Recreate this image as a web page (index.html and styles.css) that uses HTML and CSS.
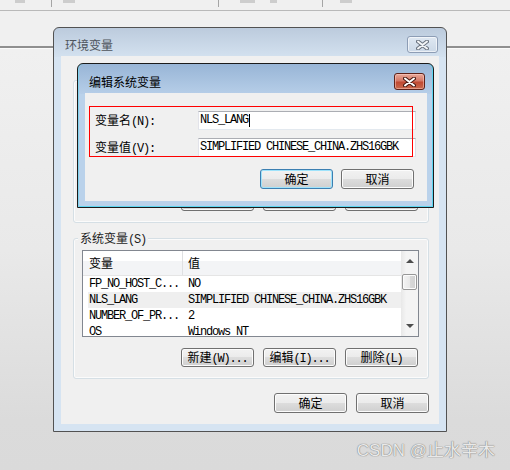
FILE: index.html
```html
<!DOCTYPE html>
<html lang="zh-CN">
<head>
  <meta charset="UTF-8">
  <title>环境变量</title>
  <link rel="stylesheet" href="styles.css">
</head>
<body>

<!-- 背景里被截掉的工具栏 -->
<div class="toolbar">
  <i class="blob b1"></i>
  <i class="sep s1"></i>
  <i class="blob b2"></i>
  <i class="sep s2"></i>
  <i class="blob b3"></i>
  <i class="blob b4"></i>
  <i class="sep s3"></i>
  <i class="blob b5"></i>
</div>
<div class="rule"></div>

<!-- 环境变量窗口 -->
<section class="win win-env">
  <div class="titlebar">
    <span class="title">环境变量</span>
    <span class="close close-idle">
      <svg width="13" height="10" viewBox="0 0 13 10"><path d="M2 1.5 L11 8.5 M11 1.5 L2 8.5" stroke="#6b7480" stroke-width="4" stroke-linecap="round"/><path d="M2 1.5 L11 8.5 M11 1.5 L2 8.5" stroke="#f4f6f8" stroke-width="2" stroke-linecap="round"/></svg>
    </span>
  </div>
  <div class="client">
    <!-- 用户变量：几乎全被对话框挡住 -->
    <div class="group group-user">
      <div class="listbox listbox-user"></div>
      <div class="btnrow">
        <button class="btn"></button>
        <button class="btn"></button>
        <button class="btn"></button>
      </div>
    </div>

    <div class="group group-sys">
      <span class="group-title">系统变量<span class="m">(S)</span></span>
      <div class="listbox">
        <div class="rows">
          <div class="row head"><span class="c1">变量</span><span class="c2">值</span></div>
          <div class="row"><span class="c1 m">FP_NO_HOST_C...</span><span class="c2 m">NO</span></div>
          <div class="row sel"><span class="c1 m">NLS_LANG</span><span class="c2 m">SIMPLIFIED CHINESE_CHINA.ZHS16GBK</span></div>
          <div class="row"><span class="c1 m">NUMBER_OF_PR...</span><span class="c2 m">2</span></div>
          <div class="row"><span class="c1 m">OS</span><span class="c2 m">Windows_NT</span></div>
        </div>
        <div class="vscroll">
          <div class="sb-btn"><i class="arrow-up"></i></div>
          <div class="thumb"></div>
          <div class="sb-btn sb-down"><i class="arrow-down"></i></div>
        </div>
      </div>
      <div class="btnrow">
        <button class="btn">新建<span class="m">(W)...</span></button>
        <button class="btn">编辑<span class="m">(I)...</span></button>
        <button class="btn">删除<span class="m">(L)</span></button>
      </div>
    </div>

    <div class="btnrow dlg-btns">
      <button class="btn btn-tall">确定</button>
      <button class="btn btn-tall">取消</button>
    </div>
  </div>
</section>

<!-- 编辑系统变量对话框 -->
<section class="win win-edit">
  <div class="titlebar">
    <span class="title">编辑系统变量</span>
    <span class="close close-red">
      <svg width="13" height="10" viewBox="0 0 13 10"><path d="M2 1.5 L11 8.5 M11 1.5 L2 8.5" stroke="#4a1a12" stroke-width="4" stroke-linecap="round"/><path d="M2 1.5 L11 8.5 M11 1.5 L2 8.5" stroke="#ffffff" stroke-width="2" stroke-linecap="round"/></svg>
    </span>
  </div>
  <div class="client edit-client">
    <div class="fields">
      <label>变量名<span class="m">(N):</span></label>
      <div class="field"><span class="m">NLS_LANG</span><i class="caret"></i></div>
      <label>变量值<span class="m">(V):</span></label>
      <div class="field"><span class="m">SIMPLIFIED CHINESE_CHINA.ZHS16GBK</span></div>
    </div>
    <div class="btnrow edit-btns">
      <button class="btn btn-tall btn-default">确定</button>
      <button class="btn btn-tall">取消</button>
    </div>
    <div class="mark"></div>
  </div>
</section>

<div class="watermark">CSDN @止水辛木</div>

</body>
</html>
```

FILE: styles.css
```css
* {
  box-sizing: border-box;
}
body {
  margin: 0;
  width: 510px;
  height: 470px;
  overflow: hidden;
  position: relative;
  font-family: "Noto Sans CJK SC", sans-serif;
  font-size: 12px;
  color: #000;
  background: linear-gradient(#f0f0f0 0, #f0f0f0 50px, #e9e9e9 250px, #dbdbdb 420px, #dadada 470px);
}
.m {
  font-family: "Liberation Mono", monospace;
  letter-spacing: -1.2px;
}

/* 背景工具栏 */
.toolbar {
  height: 11px;
  border-bottom: 1px solid #b9b9b9;
  display: flex;
  align-items: flex-start;
}
.blob {
  height: 3px;
  background: #cdcdcd;
}
.sep {
  width: 1px;
  height: 7px;
  background: #a5a5a5;
}
.b1 { margin-left: 15px; width: 10px; }
.s1 { margin-left: 26px; }
.b2 { margin-left: 11px; width: 12px; }
.s2 { margin-left: 143px; }
.b3 { margin-left: 21px; width: 15px; }
.b4 { margin-left: 15px; width: 7px; }
.s3 { margin-left: 45px; }
.b5 { margin-left: 17px; width: 12px; }
.rule {
  margin-top: 35px;
  height: 3px;
  border-top: 2px solid #8f8f8f;
  border-bottom: 1px solid #fafafa;
}

/* 窗口 */
.win {
  position: absolute;
  border: 1px solid #525252;
  border-radius: 6px 6px 0 0;
  display: flex;
  flex-direction: column;
}
.titlebar {
  display: flex;
  justify-content: space-between;
  align-items: flex-start;
  flex: none;
}
.title {
  line-height: 17px;
}
.close {
  width: 31px;
  height: 17px;
  border-radius: 3px;
  display: flex;
  align-items: center;
  justify-content: center;
}
.close-idle {
  border: 1px solid #8d9db5;
  background: linear-gradient(#dfe8f2, #cbd8e7);
  box-shadow: inset 0 0 0 1px rgba(255, 255, 255, 0.6);
}
.close-red {
  border: 1px solid #5e2219;
  background: linear-gradient(#e9a99a, #d47866 45%, #c14a33 55%, #c86a4e);
  box-shadow: inset 0 0 0 1px rgba(255, 210, 200, 0.5);
}

.win-env {
  left: 53px;
  top: 27px;
  width: 394px;
  height: 405px;
  padding: 0 7px 7px 7px;
  background: linear-gradient(#bccbdd, #d3e1ef 29px, #d6e4f2 29px);
}
.win-env .titlebar {
  height: 28px;
  padding: 8px 1px 0 4px;
}
.win-env .title {
  color: #4e545c;
}
.client {
  background: #f0f0f0;
  flex: 1;
  display: flex;
  flex-direction: column;
  padding: 24px 10px 0 12px;
}

/* 分组框 */
.group {
  position: relative;
  border: 1px solid #d5dfe5;
  border-radius: 3px;
  box-shadow: inset 0 0 0 1px #fbfbfb;
  display: flex;
  flex-direction: column;
  padding: 11px 9px 11px 8px;
}
.group-user {
  height: 143px;
}
.group-sys {
  height: 141px;
  margin-top: 15px;
}
.group-title {
  position: absolute;
  top: -9px;
  left: 4px;
  padding: 0 2px;
  line-height: 16px;
  background: #f0f0f0;
  color: #1e1e1e;
}
.listbox {
  height: 87px;
  flex: none;
  border: 1px solid #828790;
  background: #fff;
  display: flex;
  overflow: hidden;
}
.listbox-user {
  flex: 1;
}
.rows {
  flex: 1;
}
.row {
  display: flex;
  height: 16px;
  line-height: 16px;
  white-space: nowrap;
}
.row.head {
  height: 25px;
  line-height: 24px;
  border-bottom: 1px solid #e5e5e5;
  background: linear-gradient(#ffffff 42%, #f3f4f6 42%);
}
.c1 {
  width: 100px;
  padding-left: 6px;
  flex: none;
}
.head .c1 {
  border-right: 1px solid #dfe0e2;
}
.c2 {
  padding-left: 5px;
}
.row.sel {
  background: linear-gradient(to right, transparent 5px, #efefef 5px);
}
.vscroll {
  width: 17px;
  flex: none;
  background: linear-gradient(to right, #e8e8e8, #f4f4f4 30%, #f4f4f4);
  display: flex;
  flex-direction: column;
  align-items: center;
}
.sb-btn {
  height: 17px;
  width: 17px;
  display: flex;
  justify-content: center;
}
.sb-down {
  margin-top: auto;
}
.arrow-up {
  margin-top: 8px;
  width: 0;
  height: 0;
  border-left: 4px solid transparent;
  border-right: 4px solid transparent;
  border-bottom: 4px solid #4d4d4d;
}
.arrow-down {
  margin-top: 5px;
  width: 0;
  height: 0;
  border-left: 4px solid transparent;
  border-right: 4px solid transparent;
  border-top: 4px solid #4d4d4d;
}
.thumb {
  margin-top: 6px;
  width: 15px;
  height: 16px;
  border: 1px solid #979797;
  border-radius: 2px;
  background: linear-gradient(to right, #f4f4f4, #e9e9e9 50%, #d9d9d9 50%, #d2d2d2);
  box-shadow: inset 0 0 0 1px #fbfbfb;
}

/* 按钮 */
.btnrow {
  display: flex;
  justify-content: flex-end;
  gap: 9px;
  margin-top: 11px;
  padding-right: 1px;
}
.btn {
  width: 73px;
  height: 19px;
  padding: 0;
  font: inherit;
  line-height: 16px;
  color: #000;
  border: 1px solid #707070;
  border-radius: 3px;
  background: linear-gradient(#f2f2f2 0%, #ebebeb 49%, #dddddd 50%, #cfcfcf 100%);
  box-shadow: inset 0 0 0 1px #fcfcfc;
  white-space: nowrap;
}
.btn-tall {
  height: 20px;
}
.btn-default {
  border-color: #3c7fb1;
  box-shadow: inset 0 0 0 1px #9fe3fb;
}
.dlg-btns {
  margin-top: 14px;
  padding-right: 0;
}

/* 编辑对话框 */
.win-edit {
  left: 77px;
  top: 63px;
  width: 357px;
  height: 145px;
  border-color: #1b1b1b;
  padding: 0 6px 6px 7px;
  background: linear-gradient(#98b5d6, #b6cee8 30px, #bad2eb 30px);
  box-shadow: inset 1px 0 #7fd2ee, inset -1px 0 #5cd6f1, inset 0 -1px #5cd6f1;
}
.win-edit .titlebar {
  height: 29px;
  padding: 9px 2px 0 4px;
}
.edit-client {
  position: relative;
  padding: 18px 11px 0 10px;
}
.fields {
  display: grid;
  grid-template-columns: 103px 218px;
  grid-template-rows: 19px 19px;
  row-gap: 8px;
  align-items: center;
}
.fields label {
  line-height: 16px;
}
.field {
  height: 19px;
  line-height: 17px;
  padding-left: 1px;
  background: #fff;
  border: 1px solid;
  border-color: #abadb3 #dbdfe6 #e3e9ef #e2e3ea;
  white-space: nowrap;
  overflow: hidden;
  display: flex;
  align-items: center;
}
.caret {
  width: 1px;
  height: 13px;
  margin-left: 1px;
  background: #000;
}
.edit-btns {
  margin-top: 12px;
  gap: 8px;
  padding-right: 2px;
}
.mark {
  position: absolute;
  left: 4px;
  top: 13px;
  width: 324px;
  height: 51px;
  border: 1px solid #ff0000;
}

.watermark {
  position: absolute;
  right: 15px;
  top: 441px;
  font-family: "Liberation Sans", "Noto Sans CJK SC", sans-serif;
  font-size: 17px;
  line-height: 20px;
  color: #e9e9e9;
  text-shadow: 0 0 1px #7d7d7d, 0 0 1px #7d7d7d;
}
```
